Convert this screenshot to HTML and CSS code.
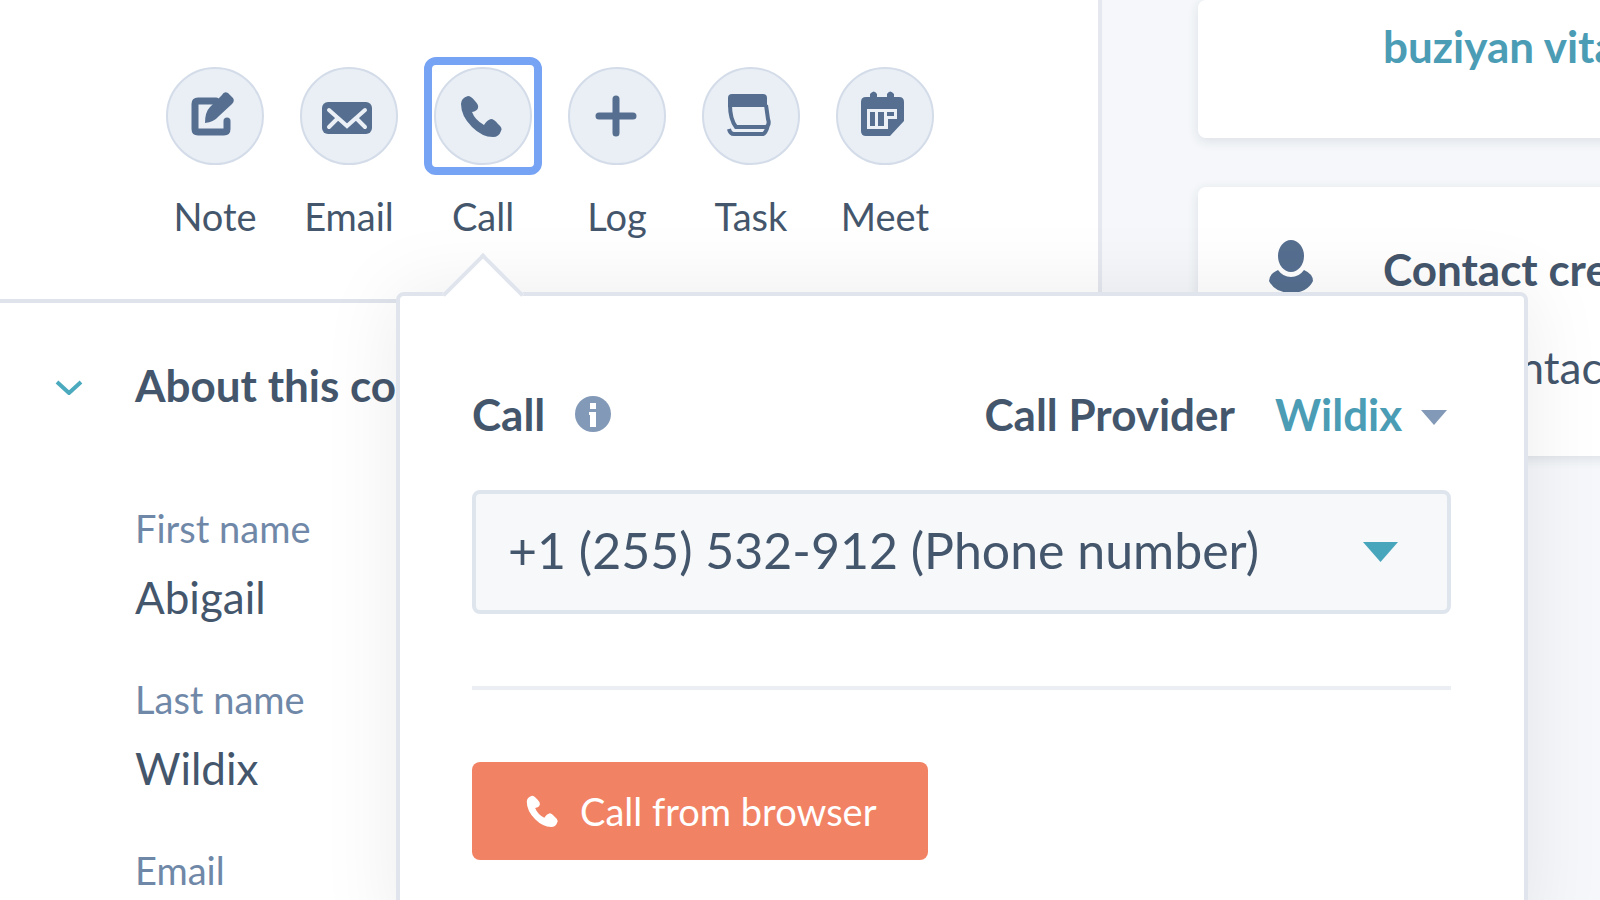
FILE: index.html
```
<!DOCTYPE html>
<html lang="en">

<head>
  <meta charset="UTF-8">
  <meta name="viewport" content="width=device-width, initial-scale=1.0">
  <title>Contact</title>
  <link rel="stylesheet" href="styles.css">
</head>

<body>
  <div class="page">
    <main class="record">
      <div class="actions">
        <button class="action" type="button">
          <span class="circle">
            <svg viewBox="0 0 98 98">
              <path d="M50 34H32Q29 34 29 37V62Q29 65 32 65H58Q61 65 61 62V54" fill="none" stroke="currentColor" stroke-width="7" stroke-linecap="round" />
              <path d="M39 56Q39 45 44 40L56 28Q58 24 62 26L67 31Q69 34 66 37L53 49Q48 55 39 56Z" />
            </svg>
          </span>
          <span class="action-label">Note</span>
        </button>
        <button class="action" type="button">
          <span class="circle">
            <svg viewBox="0 0 98 98">
              <rect x="22" y="35" width="50" height="32" rx="6" />
              <path d="M29 43L38 51L29 60M65 43L56 51L65 60M38 51L47 59L56 51" fill="none" stroke="#eaf0f6" stroke-width="4" stroke-linecap="round" />
            </svg>
          </span>
          <span class="action-label">Email</span>
        </button>
        <button class="action active" type="button">
          <span class="circle">
            <svg viewBox="0 0 98 98">
              <path d="M27 37Q27 31 34 29Q37 29 41 34Q45 38 44 41Q43 44 38 45Q41 53 50 58Q53 53 57 52Q60 52 64 57Q69 61 67 64Q65 70 59 70Q48 70 38 60Q27 49 27 37Z" />
            </svg>
          </span>
          <span class="action-label">Call</span>
        </button>
        <button class="action" type="button">
          <span class="circle">
            <svg viewBox="0 0 98 98">
              <path d="M48 32V66M31 49H65" fill="none" stroke="currentColor" stroke-width="7" stroke-linecap="round" />
            </svg>
          </span>
          <span class="action-label">Log</span>
        </button>
        <button class="action" type="button">
          <span class="circle">
            <svg viewBox="0 0 98 98">
              <path d="M26 40V31Q26 27 30 27H61Q65 27 65 31V40Z" />
              <path d="M28 38Q28 52 34 60H64Q68 58 66 52L64 38M27 62Q28 67 32 67H61Q64 66 66 58" fill="none" stroke="currentColor" stroke-width="4" />
            </svg>
          </span>
          <span class="action-label">Task</span>
        </button>
        <button class="action" type="button">
          <span class="circle">
            <svg viewBox="0 0 98 98">
              <path d="M30 30H34V27Q38 22 41 27V30H51V27Q54 22 58 27V30H63Q68 30 68 35V54L54 69H30Q25 69 25 64V35Q25 30 30 30Z" />
              <path d="M31 42H61V52H52V62H31Z" fill="#eaf0f6" />
              <path d="M34 45H39V59H34ZM42 45H48V59H42ZM51 45H58V49H51Z" />
            </svg>
          </span>
          <span class="action-label">Meet</span>
        </button>
      </div>

      <section class="about">
        <h2 class="about-title">
          <svg class="chevron" viewBox="0 0 30 16">
            <path d="M3 3L15 14L27 3" fill="none" stroke="currentColor" stroke-width="4" />
          </svg>
          About this contact
        </h2>
        <dl class="fields">
          <dt>First name</dt>
          <dd>Abigail</dd>
          <dt>Last name</dt>
          <dd>Wildix</dd>
          <dt>Email</dt>
        </dl>
      </section>
    </main>

    <aside class="feed">
      <article class="card card-link">
        <a href="#">buziyan vita</a>
      </article>
      <article class="card card-created">
        <svg class="person" viewBox="0 0 44 54">
          <ellipse cx="22" cy="16" rx="13" ry="16" />
          <path d="M9 30Q14 37 22 37Q30 37 35 30Q44 34 44 41Q38 53 22 53Q6 53 0 41Q0 34 9 30Z" />
        </svg>
        <div>
          <h3>Contact created</h3>
          <p>This contact was created</p>
        </div>
      </article>
    </aside>

    <div class="popover" role="dialog" aria-label="Call">
      <div class="popover-head">
        <h2>Call</h2>
        <svg class="info" viewBox="0 0 36 36">
          <circle cx="18" cy="18" r="18" />
          <path d="M14 16H21V31H15V19H14ZM15 7H21V13H15Z" fill="#fff" />
        </svg>
        <label for="provider">Call Provider</label>
        <div class="provider">
          <select id="provider">
            <option>Wildix</option>
          </select>
          <span class="arrow"></span>
        </div>
      </div>
      <div class="number">
        <select aria-label="Phone number">
          <option>+1 (255) 532-912 (Phone number)</option>
        </select>
        <span class="arrow"></span>
      </div>
      <hr>
      <button class="call-button" type="button">
        <svg viewBox="26 28 42 43">
          <path d="M27 37Q27 31 34 29Q37 29 41 34Q45 38 44 41Q43 44 38 45Q41 53 50 58Q53 53 57 52Q60 52 64 57Q69 61 67 64Q65 70 59 70Q48 70 38 60Q27 49 27 37Z" />
        </svg>
        Call from browser
      </button>
    </div>
  </div>
</body>

</html>
```
FILE: styles.css
```
* {
  box-sizing: border-box;
}

body {
  margin: 0;
  font-family: Lato, "Liberation Sans", sans-serif;
  font-size: 44px;
  color: #44566c;
  background: #f5f7fa;
}

h2,
h3,
p,
dl,
dd {
  margin: 0;
}

h2,
h3 {
  font-size: 44px;
  line-height: 52px;
  font-weight: 700;
}

svg {
  display: block;
  fill: currentColor;
}

button,
select {
  font-family: inherit;
  color: inherit;
  cursor: pointer;
}

select {
  appearance: none;
  outline: none;
}

.page {
  position: relative;
  display: flex;
  height: 100vh;
  overflow: hidden;
}

.record {
  flex: 1;
  background: #fff;
  border-right: 4px solid #e5e8ef;
}

.actions {
  display: flex;
  gap: 36px;
  height: 303px;
  padding: 67px 0 0 166px;
  border-bottom: 4px solid #dfe3eb;
}

.action {
  width: 98px;
  height: 98px;
  padding: 0;
  border: none;
  border-radius: 2px;
  background: none;
}

.action.active {
  outline: 8px solid #77a3f5;
  outline-offset: 2px;
}

.circle {
  display: block;
  border: 2px solid #d3dce8;
  border-radius: 50%;
  background: #eaeff6;
  color: #566f90;
}

.circle svg {
  margin: -2px;
}

.action-label {
  display: flex;
  justify-content: center;
  margin-top: 27px;
  font-size: 38px;
  line-height: 48px;
}

.about {
  padding: 56px 0 0 54px;
}

.about-title {
  display: flex;
  align-items: center;
  gap: 51px;
  white-space: nowrap;
}

.chevron {
  width: 30px;
  margin-top: 4px;
  color: #4caabf;
}

.fields {
  padding: 93px 0 0 81px;
}

.fields dt {
  font-size: 38px;
  line-height: 48px;
  color: #7088a8;
}

.fields dd {
  margin: 15px 0 48px;
  line-height: 60px;
}

.feed {
  flex: 0 0 498px;
  padding-left: 96px;
  overflow: hidden;
}

.card {
  margin-right: -24px;
  background: #fff;
  border-radius: 8px;
  box-shadow: 0 3px 12px rgba(45, 62, 80, 0.12);
  white-space: nowrap;
}

.card-link {
  height: 138px;
  padding: 20px 0 0 185px;
  line-height: 52px;
  font-weight: 700;
}

.card a {
  color: #4b9cb5;
  text-decoration: none;
}

.card-created {
  display: flex;
  gap: 70px;
  height: 269px;
  margin-top: 49px;
  padding: 56px 0 0 71px;
}

.card-created p {
  margin-top: 46px;
  line-height: 52px;
}

.person {
  flex: none;
  width: 44px;
  height: 54px;
  margin-top: -3px;
  color: #566f90;
}

.popover {
  position: absolute;
  top: 292px;
  right: 72px;
  bottom: -40px;
  left: 396px;
  padding: 88px 73px 0 72px;
  background: #fff;
  border: 4px solid #e0e5ed;
  border-radius: 8px;
  box-shadow: 0 0 80px rgba(0, 0, 0, 0.08);
}

/* caret pointing at the Call button */
.popover::before {
  content: "";
  position: absolute;
  top: -31px;
  left: 54px;
  width: 54px;
  height: 54px;
  background: #fff;
  border: 4px solid #e0e5ed;
  border-width: 4px 0 0 4px;
  transform: rotate(45deg);
}

.popover-head {
  display: flex;
  align-items: center;
}

.info {
  width: 36px;
  margin-left: 30px;
  color: #8299b7;
}

.popover-head label {
  margin-left: auto;
  font-weight: 700;
}

.provider,
.number {
  position: relative;
}

.provider {
  margin-left: 40px;
}

.provider select {
  display: block;
  padding: 0 48px 0 0;
  border: none;
  background: none;
  font-size: 44px;
  line-height: 60px;
  font-weight: 700;
  color: #4b9cb5;
}

.arrow {
  position: absolute;
  top: 50%;
  pointer-events: none;
  clip-path: polygon(0 0, 100% 0, 50% 100%);
}

.provider .arrow {
  right: 4px;
  width: 26px;
  height: 15px;
  margin-top: -4px;
  background: #8299b7;
}

.number {
  margin-top: 46px;
}

.number select {
  display: block;
  width: 100%;
  height: 124px;
  padding: 0 32px 4px;
  border: 4px solid #dfe5ed;
  border-radius: 8px;
  background: #f6f8fa;
  font-size: 50px;
}

.number .arrow {
  right: 53px;
  width: 35px;
  height: 20px;
  margin-top: -10px;
  background: #47a5bc;
}

hr {
  height: 4px;
  margin: 72px 0;
  border: none;
  background: #ebeff4;
}

.call-button {
  display: flex;
  align-items: center;
  gap: 22px;
  height: 98px;
  padding: 0 52px 0 54px;
  border: none;
  border-radius: 8px;
  background: #f28264;
  font-size: 38px;
  color: #fff;
}

.call-button svg {
  width: 32px;
}
```
